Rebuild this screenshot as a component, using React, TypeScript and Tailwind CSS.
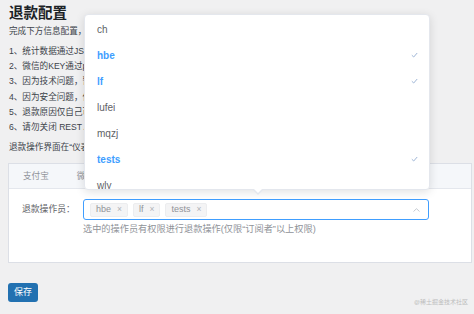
import React from "react";

const items: { n: string; s?: boolean }[] = [
  { n: "ch" },
  { n: "hbe", s: true },
  { n: "lf", s: true },
  { n: "lufei" },
  { n: "mqzj" },
  { n: "tests", s: true },
  { n: "wly" },
];

const lines = [
  "1、统计数据通过JSON接口获取，请确保接口可访问；",
  "2、微信的KEY通过pem文件配置，请妥善保管；",
  "3、因为技术问题，暂不支持部分退款；",
  "4、因为安全问题，仅管理员可配置；",
  "5、退款原因仅自己可见；",
  "6、请勿关闭 REST API 接口；",
];

function Check() {
  return (
    <svg width="7" height="6" viewBox="0 0 7 6" fill="none">
      <path d="M0.8 3.2 L2.7 5 L6.2 1" stroke="#9fb6d6" strokeWidth="1" />
    </svg>
  );
}

function Tag({ label }: { label: string }) {
  return (
    <span className="flex h-[14px] items-center gap-[6px] rounded-[2px] border border-[#ecedef] bg-[#f4f4f5] px-[5px] text-[9px] text-[#909399]">
      {label}
      <span className="text-[8.5px] leading-none text-[#b0b3b8]">×</span>
    </span>
  );
}

export default function App() {
  return (
    <div className="relative min-h-[314px] w-[474px] overflow-hidden bg-[#f0f0f1] font-['Liberation_Sans','Noto_Sans_CJK_SC',sans-serif]">
      <div className="pl-[8px] pr-[2px] pt-[3px]">
        <h1 className="pl-[1px] text-[14.5px] font-semibold leading-[20px] text-[#1d2327]">退款配置</h1>
        <p className="mt-[1px] pl-[1px] text-[8.6px] leading-[15px] text-[#3c434a]">完成下方信息配置，即可在后台进行订单退款操作。</p>
        <div className="mt-[5px] pl-[1px] text-[8.6px] leading-[15.2px] text-[#3c434a]">
          {lines.map((l) => (
            <div key={l}>{l}</div>
          ))}
        </div>
        <p className="mt-[5px] pl-[1px] text-[8.6px] leading-[15px] text-[#3c434a]">退款操作界面在“仪表盘 - 订单管理”中。</p>

        <div className="mt-[8px] border border-[#dcdfe6] bg-white">
          <div className="flex h-[25px] items-center border-b border-[#e4e7ed] bg-[#f5f7fa] text-[8.6px] text-[#909399]">
            <span className="px-[14px]">支付宝</span>
            <span className="px-[14px]">微信</span>
          </div>
          <div className="h-[73px] pl-[13px] pt-[10px]">
            <div className="flex items-center">
              <span className="w-[61px] text-[8.8px] text-[#606266]">退款操作员：</span>
              <div className="flex h-[21px] w-[346px] items-center justify-between rounded-[3px] border border-[#409eff] bg-white pl-[6px] pr-[8px]">
                <div className="flex items-center gap-[5px]">
                  <Tag label="hbe" />
                  <Tag label="lf" />
                  <Tag label="tests" />
                </div>
                <svg width="7" height="4" viewBox="0 0 7 4" fill="none">
                  <path d="M0.5 3.5 L3.5 0.7 L6.5 3.5" stroke="#c0c4cc" strokeWidth="0.9" />
                </svg>
              </div>
            </div>
            <p className="mt-[2px] pl-[61px] text-[9.2px] leading-[14px] text-[#909399]">
              选中的操作员有权限进行退款操作(仅限“订阅者”以上权限)
            </p>
          </div>
        </div>

        <button className="mt-[20px] flex h-[19px] w-[30px] items-center justify-center rounded-[3px] bg-[#2271b1] text-[9px] text-white">
          保存
        </button>
      </div>

      <div className="absolute bottom-[7px] right-[6px] text-[6px] text-[#bdbdbd]">@稀土掘金技术社区</div>

      {/* dropdown popper */}
      <div className="absolute left-[84px] top-[14px] h-[176px] w-[346px] rounded-[4px] border border-[#e4e7ed] bg-white shadow-[0_2px_10px_rgba(0,0,0,0.12)]">
        <div className="h-full overflow-hidden pt-[1px]">
          {items.map((it) => (
            <div key={it.n} className="flex h-[26px] items-center justify-between pl-[12px] pr-[11px]">
              <span className={it.s ? "text-[10px] font-bold text-[#409eff]" : "text-[10px] text-[#606266]"}>{it.n}</span>
              {it.s && <Check />}
            </div>
          ))}
        </div>
        <div className="absolute left-[168px] top-[175px] h-0 w-0 border-l-[5px] border-r-[5px] border-t-[5px] border-l-transparent border-r-transparent border-t-[#e4e7ed]" />
        <div className="absolute left-[169px] top-[174px] h-0 w-0 border-l-[4px] border-r-[4px] border-t-[4px] border-l-transparent border-r-transparent border-t-white" />
      </div>
    </div>
  );
}
